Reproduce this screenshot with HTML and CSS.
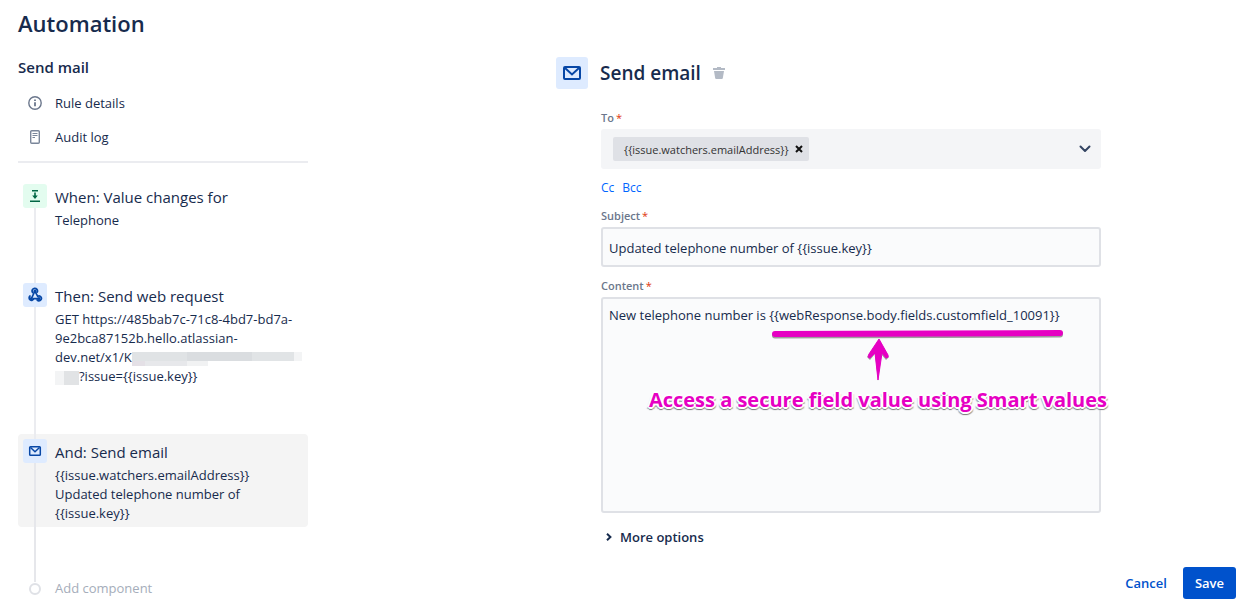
FILE: index.html
```html
<!DOCTYPE html>
<html lang="en">
<head>
    <meta charset="UTF-8">
    <meta name="viewport" content="width=device-width, initial-scale=1.0">
    <title>Automation</title>
    <link rel="stylesheet" href="styles.css">
</head>
<body>
    <div class="page">
        <aside class="sidebar">
            <h1>Automation</h1>
            <h2>Send mail</h2>
            <nav class="rule-nav">
                <a href="#details">
                    <svg width="16" height="16" viewBox="0 0 16 16" fill="none" stroke="#6b778c" stroke-width="1.4">
                        <circle cx="8" cy="8" r="6.2"/>
                        <path d="M8 7.2v4M8 4.4v1.5" stroke-width="1.8"/>
                    </svg>
                    Rule details
                </a>
                <a href="#audit">
                    <svg width="16" height="16" viewBox="0 0 16 16" fill="none" stroke="#7a869a" stroke-width="1.4">
                        <rect x="3.7" y="1.7" width="8.6" height="12.6" rx="1"/>
                        <path d="M5.5 4.5h5M5.5 6.5h5M5.5 8.5h2.5" stroke-width="1.1"/>
                    </svg>
                    Audit log
                </a>
            </nav>

            <ol class="chain">
                <li class="step">
                    <span class="step-icon trigger">
                        <svg width="16" height="16" viewBox="0 0 16 16" fill="#006644">
                            <path d="M5 2h6v1.5H5zM3 12.5h10V14H3zM7.2 4.5h1.6v3h2L8 11 5.200 7.500h2z"/>
                        </svg>
                    </span>
                    <div class="step-text">
                        <h3>When: Value changes for</h3>
                        <p>Telephone</p>
                    </div>
                </li>
                <li class="step">
                    <span class="step-icon">
                        <svg width="16" height="16" viewBox="0 0 16 16" fill="none" stroke="#0747a6" stroke-width="1.7" stroke-linecap="round">
                            <path d="M5.600 5.600A2.700 2.700 0 1 1 10.300 5M8 4.300l2.700 5a2.400 2.400 0 1 1-.6 3.600"/>
                            <path d="M7.700 4.500L4.500 11.400M3 9a2.400 2.400 0 1 0 3.800 2.600h5.400"/>
                            <circle cx="8" cy="4.200" r=".8"/>
                            <circle cx="4.300" cy="11.500" r=".7"/>
                            <circle cx="12" cy="11.500" r=".7"/>
                        </svg>
                    </span>
                    <div class="step-text">
                        <h3>Then: Send web request</h3>
                        <p>GET https://485bab7c-71c8-4bd7-bd7a-<br>9e2bca87152b.hello.atlassian-<br>dev.net/x1/K<span class="redacted long"></span><br><span class="redacted short"></span>?issue={{issue.key}}</p>
                    </div>
                </li>
                <li class="step selected">
                    <span class="step-icon">
                        <svg width="16" height="16" viewBox="0 0 16 16" fill="none" stroke="#0747a6" stroke-width="1.5">
                            <rect x="2.700" y="3.700" width="10.600" height="8.600" rx=".8"/>
                            <path d="M3.500 4.500L8 8.700l4.500-4.200"/>
                        </svg>
                    </span>
                    <div class="step-text">
                        <h3>And: Send email</h3>
                        <p>{{issue.watchers.emailAddress}}<br>Updated telephone number of<br>{{issue.key}}</p>
                    </div>
                </li>
                <li class="step add">
                    <span class="step-dot"></span>
                    <button type="button">Add component</button>
                </li>
            </ol>
        </aside>

        <main class="panel">
            <form class="editor" id="email-form">
                <header class="editor-head">
                    <span class="editor-icon">
                        <svg width="20" height="20" viewBox="0 0 20 20" fill="none" stroke="#0747a6" stroke-width="2">
                            <rect x="2" y="4" width="16" height="12" rx="1"/>
                            <path d="M3 5l7 6.500L17 5"/>
                        </svg>
                    </span>
                    <h2>Send email</h2>
                    <button type="button" class="delete" aria-label="Delete">
                        <svg width="12" height="12" viewBox="0 0 12 12" fill="#b3bac5">
                            <path d="M4 0h4v1h4v2H0V1h4zM1 4h10l-1.200 7.200a1 1 0 0 1-1 .8H3.200a1 1 0 0 1-1-.8z"/>
                        </svg>
                    </button>
                </header>

                <div class="fields">
                    <label for="to">To<span class="required">*</span></label>
                    <div class="recipients">
                        <span class="chip">
                            {{issue.watchers.emailAddress}}
                            <button type="button" aria-label="Remove">
                                <svg width="8" height="8" viewBox="0 0 8 8" stroke="#111" stroke-width="2">
                                    <path d="M1 1l6 6M7 1L1 7"/>
                                </svg>
                            </button>
                        </span>
                        <input type="text" id="to">
                        <button type="button" class="open" aria-label="Open">
                            <svg width="12" height="8" viewBox="0 0 12 8" fill="none" stroke="#344563" stroke-width="2" stroke-linecap="round" stroke-linejoin="round">
                                <path d="M1.500 1.500L6 6l4.500-4.500"/>
                            </svg>
                        </button>
                    </div>
                    <div class="copies">
                        <a href="#cc">Cc</a>
                        <a href="#bcc">Bcc</a>
                    </div>

                    <label for="subject">Subject<span class="required">*</span></label>
                    <input type="text" id="subject" class="box" value="Updated telephone number of {{issue.key}}">

                    <label for="content">Content<span class="required">*</span></label>
                    <div class="content">
                        <textarea id="content" class="box">New telephone number is {{webResponse.body.fields.customfield_10091}}</textarea>
                        <div class="note">
                            <svg width="292" height="52" viewBox="0 0 292 52">
                                <g fill="#777" opacity=".7" transform="translate(0 1)">
                                    <path d="M3 4.500L288 3.500" stroke="#777" stroke-width="6" stroke-linecap="round"/>
                                    <path d="M107 9l10 17-3 3-5-6-3 27-3-27-5 6-3-3z"/>
                                </g>
                                <path d="M3 4L288 3" stroke="#e600c3" stroke-width="6" stroke-linecap="round"/>
                                <path d="M107 9l9 16q1 3-2 3l-4-5-4 27-3-27-5 5q-3 0-1-4z" fill="#e600c3" stroke="#e600c3" stroke-linejoin="round"/>
                            </svg>
                            <p>Access a secure field value using Smart values</p>
                        </div>
                    </div>

                    <button type="button" class="more">
                        <svg width="6" height="8" viewBox="0 0 6 8" fill="none" stroke="#172b4d" stroke-width="2">
                            <path d="M1 .8L4.400 4 1 7.200"/>
                        </svg>
                        More options
                    </button>
                </div>
            </form>

            <div class="actions">
                <button type="button" class="cancel">Cancel</button>
                <button type="submit" form="email-form" class="save">Save</button>
            </div>
        </main>
    </div>
</body>
</html>
```
FILE: styles.css
```css
* {
    box-sizing: border-box;
}

body {
    margin: 0;
    background-color: #fff;
    font-family: "Open Sans", "Noto Sans", sans-serif;
    font-size: 13px;
    line-height: 19px;
    color: #172b4d;
}

h1, h2, h3, p, ol {
    margin: 0;
    padding: 0;
}

button, input, textarea {
    font: inherit;
    color: inherit;
}

button {
    border: 0;
    padding: 0;
    background: none;
    cursor: pointer;
}

a {
    text-decoration: none;
}

svg {
    display: block;
    flex: none;
}

.page {
    display: flex;
    padding: 0 17px 0 18px;
}

/* rule sidebar */
.sidebar {
    flex: none;
    width: 290px;
    padding-top: 7px;
}

.sidebar h1 {
    font-size: 22px;
    font-weight: 600;
    line-height: 32px;
}

.sidebar h2 {
    margin-top: 18px;
    font-size: 15px;
    font-weight: 600;
    line-height: 20px;
}

.rule-nav {
    padding: 9px 0 7px;
    border-bottom: 2px solid #ebecf0;
}

.rule-nav a {
    display: flex;
    align-items: center;
    gap: 12px;
    height: 34px;
    padding-left: 9px;
    color: inherit;
}

.chain {
    margin-top: 16px;
    list-style: none;
}

.step {
    position: relative;
    display: flex;
    gap: 8px;
    margin-bottom: 44px;
    padding: 5px 5px 4px;
    border-radius: 4px;
}

/* connector down to the next step */
.step::before {
    content: "";
    position: absolute;
    z-index: 1;
    top: 5px;
    bottom: -55px;
    left: 16px;
    width: 2px;
    background-color: #ebecf0;
}

.step.selected {
    background-color: #f4f4f4;
}

.step.selected::before {
    background-color: #e6e7eb;
}

.step-icon {
    position: relative;
    z-index: 2;
    display: flex;
    flex: none;
    align-items: center;
    justify-content: center;
    width: 24px;
    height: 24px;
    border-radius: 3px;
    background-color: #deebff;
}

.step-icon.trigger {
    background-color: #e3fcef;
}

.step-text {
    padding-top: 3px;
    white-space: nowrap;
}

.step-text h3 {
    margin-bottom: 4px;
    font-size: 15px;
    font-weight: 400;
    line-height: 20px;
}

.redacted {
    display: inline-block;
    height: 14px;
    vertical-align: -4px;
}

.redacted.long {
    width: 170px;
    background:
        linear-gradient(to right, #e0e3e5 55px, #dadde0 55px, #dadde0 120px, #e1e4e6 120px, #e1e4e6 162px, #f3f4f5 162px) top / 100% 9px no-repeat,
        linear-gradient(to right, #e4e0e6 13px, #e7e8eb 13px, #e7e8eb 55px, #f1f2f3 55px) left bottom / 76px 5px no-repeat;
}

.redacted.short {
    width: 24px;
    background: linear-gradient(to right, #f3f4f5 9px, #e1e3e5 9px);
}

.step.add {
    align-items: center;
    gap: 14px;
    margin: 0;
    padding: 8px 11px;
    color: #a5adba;
}

.step.add::before {
    display: none;
}

.step-dot {
    position: relative;
    z-index: 2;
    width: 12px;
    height: 12px;
    border: 2px solid #dfe1e6;
    border-radius: 50%;
    background-color: #fff;
}

/* component editor */
.panel {
    flex: 1;
    padding-top: 57px;
}

.editor {
    max-width: 793px;
    padding-left: 248px;
}

.editor-head {
    display: flex;
    align-items: center;
    gap: 12px;
    margin-bottom: 21px;
}

.editor-icon {
    display: flex;
    align-items: center;
    justify-content: center;
    width: 32px;
    height: 32px;
    border-radius: 3px;
    background-color: #deebff;
}

.editor-head h2 {
    font-size: 19px;
    font-weight: 600;
    line-height: 32px;
}

.fields {
    margin-left: 45px;
}

.fields label {
    display: block;
    margin-bottom: 3px;
    font-size: 11px;
    font-weight: 600;
    line-height: 16px;
    color: #6b778c;
}

.required {
    padding-left: 2px;
    font-weight: 400;
    color: #de350b;
}

.recipients {
    display: flex;
    align-items: center;
    height: 40px;
    padding: 0 10px 0 12px;
    border-radius: 3px;
    background-color: #f4f5f7;
}

.recipients input {
    flex: 1;
    min-width: 0;
    border: 0;
    outline: 0;
    background: none;
}

.chip {
    display: flex;
    align-items: center;
    gap: 6px;
    height: 24px;
    padding: 0 6px 0 11px;
    border-radius: 2px;
    background-color: #dfe1e6;
    font-size: 11px;
    color: #333;
}

.copies {
    display: flex;
    gap: 8px;
    margin: 11px 0 12px;
    font-size: 12px;
    line-height: 16px;
}

.copies a {
    color: #0065ff;
}

.box {
    display: block;
    width: 100%;
    height: 40px;
    margin-bottom: 11px;
    padding: 2px 6px 0;
    border: 2px solid #dfe1e6;
    border-radius: 3px;
    outline: 0;
    background-color: #fafbfc;
}

textarea.box {
    height: 216px;
    margin: 0;
    padding-top: 7px;
    resize: none;
}

.content {
    position: relative;
}

/* callout lying over the text area */
.note {
    position: absolute;
    top: 33px;
    right: -6px;
    display: flex;
    flex-direction: column;
    align-items: flex-end;
    pointer-events: none;
}

.note svg {
    margin-right: 43px;
}

.note p {
    margin-top: 4px;
    font-size: 20px;
    font-weight: 700;
    line-height: 28px;
    white-space: nowrap;
    color: #e600c3;
    text-shadow: -2px 0 #fff, 2px 0 #fff, 0 -2px #fff, 0 2px #fff, 1px 1px #fff, -1px 1px #fff, 0 3px 1px #777, -2px 2px 1px #aaa, 2px 2px 1px #aaa;
}

.more {
    display: flex;
    align-items: center;
    gap: 8px;
    margin-top: 14px;
    padding-left: 5px;
    font-weight: 600;
    line-height: 20px;
}

.actions {
    display: flex;
    justify-content: flex-end;
    gap: 4px;
    margin-top: 20px;
    padding-bottom: 14px;
}

.actions button {
    height: 32px;
    padding: 0 12px;
    border-radius: 3px;
    font-weight: 600;
}

.actions .cancel {
    color: #0052cc;
}

.actions .save {
    background-color: #0052cc;
    color: #fff;
}
```
